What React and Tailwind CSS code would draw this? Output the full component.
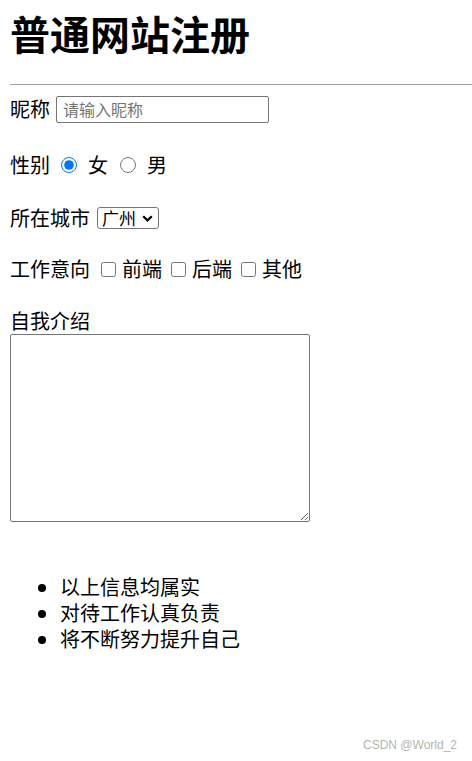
import { useState } from "react";

const cities = ["广州", "深圳", "北京", "上海"];
const jobs = ["前端", "后端", "其他"];
const promises = ["以上信息均属实", "对待工作认真负责", "将不断努力提升自己"];

const App = () => {
  const [nickname, setNickname] = useState("");
  const [gender, setGender] = useState("女");
  const [city, setCity] = useState("广州");
  const [picked, setPicked] = useState([]);
  const [intro, setIntro] = useState("");

  const togglePick = (job) => {
    setPicked((prev) =>
      prev.includes(job) ? prev.filter((j) => j !== job) : [...prev, job]
    );
  };

  return (
    <div className="min-h-[761px] bg-white px-[10px] text-black text-[20px] font-['Microsoft_YaHei','Noto_Sans_CJK_SC',sans-serif]">
      <h1 className="mt-[8px] h-[50px] text-[40px] font-bold leading-[50px]">普通网站注册</h1>
      <hr className="-mr-[10px] mt-[26px] border-t border-[#a0a0a0]" />

      <form onSubmit={(e) => e.preventDefault()}>
        <div className="mt-[10px] flex h-[28px] items-center leading-[26px]">
          <span>昵称</span>
          <input
            className="ml-[6px] h-[27px] w-[213px] rounded-[2px] border border-[#767676] px-[6px] text-[16px] placeholder:text-[#757575]"
            type="text"
            placeholder="请输入昵称"
            value={nickname}
            onChange={(e) => setNickname(e.target.value)}
          />
        </div>

        <div className="mt-[28px] flex h-[28px] items-center leading-[26px]">
          <span>性别</span>
          <input
            className="ml-[11px] h-[16px] w-[16px]"
            type="radio"
            name="gender"
            checked={gender === "女"}
            onChange={() => setGender("女")}
          />
          <span className="ml-[11px]">女</span>
          <input
            className="ml-[12px] h-[16px] w-[16px]"
            type="radio"
            name="gender"
            checked={gender === "男"}
            onChange={() => setGender("男")}
          />
          <span className="ml-[11px]">男</span>
        </div>

        <div className="mt-[25px] flex h-[28px] items-center leading-[26px]">
          <span>所在城市</span>
          <div className="relative ml-[7px] flex">
            <select
              className="h-[22px] w-[62px] appearance-none rounded-[3px] border border-[#767676] bg-white pl-[4px] text-[17px] leading-[20px]"
              value={city}
              onChange={(e) => setCity(e.target.value)}
            >
              {cities.map((c) => (
                <option key={c} value={c}>
                  {c}
                </option>
              ))}
            </select>
            <svg
              className="pointer-events-none absolute right-[6px] top-[8px]"
              width="11"
              height="7"
              viewBox="0 0 11 7"
              fill="none"
            >
              <path d="M1.2 1.2 L5.5 5.4 L9.8 1.2" stroke="#000" strokeWidth="2.2" />
            </svg>
          </div>
        </div>

        <div className="mt-[23px] flex h-[28px] items-center leading-[26px]">
          <span>工作意向</span>
          {jobs.map((job, i) => (
            <label key={job} className="flex items-center">
              <input
                className={`${i === 0 ? "ml-[11px]" : "ml-[9px]"} h-[15px] w-[15px]`}
                type="checkbox"
                checked={picked.includes(job)}
                onChange={() => togglePick(job)}
              />
              <span className="ml-[6px]">{job}</span>
            </label>
          ))}
        </div>

        <div className="mt-[26px] h-[24px] leading-[24px]">自我介绍</div>
        <textarea
          className="mt-[1px] block h-[188px] w-[300px] rounded-[2px] border border-[#767676]"
          value={intro}
          onChange={(e) => setIntro(e.target.value)}
        />
      </form>

      <ul className="mt-[52px] list-disc pl-[50px] leading-[26px]">
        {promises.map((p) => (
          <li key={p}>{p}</li>
        ))}
      </ul>

      <div className="mt-[85px] flex justify-end pr-[5px]">
        <span className="text-[12px] leading-[16px] text-[#b4b4b4] font-['Liberation_Sans',Arial,sans-serif]">
          CSDN @World_2
        </span>
      </div>
    </div>
  );
};

export default App;
